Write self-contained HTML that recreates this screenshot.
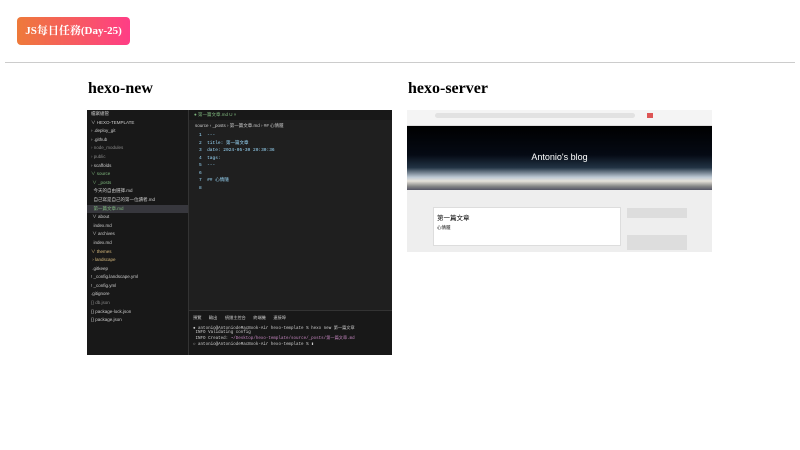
<!DOCTYPE html>
<html><head><meta charset="utf-8"><style>
*{margin:0;padding:0;box-sizing:border-box}
body{width:800px;height:450px;background:#fff;font-family:"Liberation Serif","Noto Serif CJK SC",serif;position:relative;overflow:hidden}
.btn{position:absolute;left:17px;top:17px;width:113px;height:28px;border-radius:4px;background:linear-gradient(90deg,#ee7a3a,#ff3d86);color:#fff;font-weight:bold;font-size:11px;text-align:center;line-height:28px}
.hr{position:absolute;left:5px;top:62px;width:790px;height:1px;background:#ccc}
h2{position:absolute;font-size:16px;font-weight:bold;top:80px}
.a{position:absolute;font-family:"Liberation Sans","Noto Sans CJK TC",sans-serif}
.vs{left:87px;top:110px;width:305px;height:245px;background:#1f1f1f;color:#ccc;font-size:4.5px}
.side{position:absolute;left:0;top:0;width:102px;height:245px;background:#181818;border-right:1px solid #333}
.side div{height:8.6px;line-height:8.6px;padding-left:4px;white-space:nowrap}
.term{position:absolute;left:102px;top:200px;width:203px;height:45px;background:#181818;border-top:1px solid #333;font-family:"Liberation Mono",monospace;font-size:4.2px;padding:4px}
</style></head><body>
<div class="btn">JS每日任務(Day-25)</div>
<div class="hr"></div>
<h2 style="left:88px">hexo-new</h2>
<h2 style="left:408px">hexo-server</h2>
<div class="a vs">
 <div class="side">
  <div>檔案總管</div><div>∨ HEXO-TEMPLATE</div><div>› .deploy_git</div><div>› .github</div><div style="color:#888">› node_modules</div><div style="color:#888">› public</div><div>› scaffolds</div><div style="color:#7fb77e">∨ source</div><div style="color:#7fb77e">&nbsp;∨ _posts</div><div>&nbsp;&nbsp;今天的自由選擇.md</div><div>&nbsp;&nbsp;自己寫是自己的第一位讀者.md</div><div style="background:#37373d;color:#7fb77e">&nbsp;&nbsp;第一篇文章.md</div><div>&nbsp;∨ about</div><div>&nbsp;&nbsp;index.md</div><div>&nbsp;∨ archives</div><div>&nbsp;&nbsp;index.md</div><div style="color:#d7ba7d">∨ themes</div><div style="color:#d7ba7d">&nbsp;› landscape</div><div>&nbsp;.gitkeep</div><div>! _config.landscape.yml</div><div>! _config.yml</div><div>.gitignore</div><div style="color:#888">{} db.json</div><div>{} package-lock.json</div><div>{} package.json</div>
 </div>
 <div style="position:absolute;left:102px;top:0;width:203px;height:10px;background:#181818"><span style="position:absolute;left:5px;top:2px;color:#7fb77e">● 第一篇文章.md U ×</span></div>
 <div style="position:absolute;left:108px;top:13px">source › _posts › 第一篇文章.md › ## 心情隨</div>
 <div style="position:absolute;left:112px;top:22px;line-height:7.5px;font-family:'Liberation Mono',monospace;color:#9cdcfe">1 &nbsp;---<br>2 &nbsp;title: 第一篇文章<br>3 &nbsp;date: 2024-05-30 20:30:36<br>4 &nbsp;tags:<br>5 &nbsp;---<br>6<br>7 &nbsp;## 心情隨<br>8</div>
 <div class="term">預覽 &nbsp; 輸出 &nbsp; 偵錯主控台 &nbsp; 終端機 &nbsp; 連接埠<br><br>● antonio@AntoniodeMacBook-Air hexo-template % hexo new 第一篇文章<br>&nbsp;INFO Validating config<br>&nbsp;INFO Created: <span style="color:#c586c0">~/Desktop/hexo-template/source/_posts/第一篇文章.md</span><br>○ antonio@AntoniodeMacBook-Air hexo-template % ▮</div>
</div>
<div class="a" style="left:407px;top:110px;width:305px;height:142px;background:#eee;overflow:hidden">
 <div style="height:16px;background:#f4f4f4;border-bottom:1px solid #ddd"><div style="position:absolute;left:28px;top:3px;width:200px;height:5px;background:#e2e2e2;border-radius:3px"></div><div style="position:absolute;left:240px;top:3px;width:6px;height:5px;background:#d55"></div></div>
 <div style="position:absolute;left:0;top:16px;width:305px;height:64px;background:linear-gradient(#000 0%,#050a14 45%,#234 65%,#bcc8d4 80%,#e6e2da 86%,#888 94%,#556 100%)"></div>
 <div style="position:absolute;left:0;top:42px;width:305px;text-align:center;color:#fff;font-size:9px">Antonio's blog</div>
 <div style="position:absolute;left:26px;top:97px;width:188px;height:39px;background:#fff;border:1px solid #ddd;padding:4px 3px"><div style="font-size:6.5px">第一篇文章</div><div style="font-size:4.5px;margin-top:3px">心情隨</div></div>
 <div style="position:absolute;left:220px;top:98px;width:60px;height:10px;background:#ddd"></div>
 <div style="position:absolute;left:220px;top:125px;width:60px;height:15px;background:#ddd"></div>
</div>
</body></html>
